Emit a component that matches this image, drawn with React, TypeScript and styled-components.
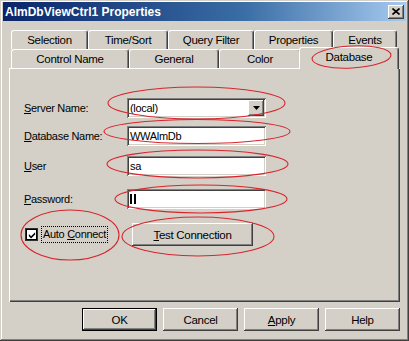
import React from 'react';
import styled, { createGlobalStyle, css } from 'styled-components';

const Global = createGlobalStyle`
  html, body { margin: 0; padding: 0; background: #d4d0c8; }
  body {
    font-family: "Liberation Sans", Arial, sans-serif;
    font-size: 11px;
    color: #000;
    letter-spacing: -0.3px;
  }
  #root { width: 409px; height: 341px; }
`;

const raised = css`
  box-shadow: inset -1px -1px 0 #404040, inset 1px 1px 0 #ffffff,
    inset -2px -2px 0 #808080, inset 2px 2px 0 #d4d0c8;
`;

const sunken = css`
  box-shadow: inset 1px 1px 0 #808080, inset -1px -1px 0 #ffffff,
    inset 2px 2px 0 #404040, inset -2px -2px 0 #d4d0c8;
`;

const Window = styled.div`
  position: relative;
  width: 409px;
  height: 341px;
  box-sizing: border-box;
  background: #d4d0c8;
  padding: 2px 3px 3px 3px;
  box-shadow: inset -1px -1px 0 #404040, inset 1px 1px 0 #d4d0c8,
    inset -2px -2px 0 #808080, inset 2px 2px 0 #ffffff;
  display: flex;
  flex-direction: column;
`;

const TitleBar = styled.div`
  height: 19px;
  display: flex;
  align-items: center;
  justify-content: space-between;
  padding-left: 2px;
  background: linear-gradient(to right, #0a246a, #3a6ea5 60%, #a6caf0);
  color: #fff;
  font-weight: bold;
  font-size: 12px;
  letter-spacing: 0;
`;

const CloseButton = styled.div`
  width: 16px;
  height: 14px;
  margin-right: 2px;
  background: #d4d0c8;
  ${raised};
  display: flex;
  align-items: center;
  justify-content: center;
`;

const Body = styled.div`
  display: flex;
  flex-direction: column;
  padding: 10px 6px 0 6px;
`;

const TabRow = styled.div<{ $h: number }>`
  display: flex;
  align-items: flex-end;
  height: ${p => p.$h}px;
  padding-left: 2px;
`;

const Tab = styled.div<{ $w: number; $sel?: boolean }>`
  box-sizing: border-box;
  width: ${p => (p.$sel ? p.$w + 4 : p.$w)}px;
  height: ${p => (p.$sel ? 22 : 19)}px;
  background: #d4d0c8;
  border-left: 1px solid #ffffff;
  border-top: 1px solid #ffffff;
  border-right: 1px solid #404040;
  border-radius: 3px 3px 0 0;
  box-shadow: inset -1px 0 0 #808080;
  display: flex;
  align-items: center;
  justify-content: center;
  font-size: 11.5px;
  padding-bottom: ${p => (p.$sel ? 3 : 0)}px;
  ${p =>
    p.$sel &&
    css`
      position: relative;
      z-index: 2;
      margin: 0 -2px -1px -2px;
    `}
`;

const Panel = styled.div`
  height: 234px;
  box-sizing: border-box;
  background: #d4d0c8;
  box-shadow: inset 1px 1px 0 #ffffff, inset -1px -1px 0 #404040,
    inset -2px -2px 0 #808080;
  padding: 0 0 0 15px;
  display: flex;
  flex-direction: column;
`;

const FieldRow = styled.div<{ $mt: number; $h?: number }>`
  display: flex;
  align-items: center;
  height: ${p => p.$h ?? 20}px;
  margin-top: ${p => p.$mt}px;
`;

const Label = styled.div`
  width: 103px;
  padding-bottom: 1px;
`;

const Key = styled.span`
  text-decoration: underline;
  text-underline-offset: 1px;
`;

const TextBox = styled.div`
  box-sizing: border-box;
  width: 139px;
  height: 20px;
  background: #fff;
  ${sunken};
  display: flex;
  align-items: center;
  padding: 0 2px 0 3px;
`;

const ComboValue = styled.div`
  flex: 1;
`;

const DropButton = styled.div`
  width: 16px;
  height: 16px;
  background: #d4d0c8;
  ${raised};
  display: flex;
  align-items: center;
  justify-content: center;
`;

const CheckGroup = styled.div`
  width: 108px;
  display: flex;
  align-items: center;
`;

const CheckBox = styled.div`
  box-sizing: border-box;
  width: 13px;
  height: 13px;
  margin-left: 1px;
  background: #fff;
  box-shadow: inset 0 0 0 1px #303030, inset 0 0 0 2px #000;
  display: flex;
  align-items: center;
  justify-content: center;
`;

const FocusLabel = styled.div`
  margin-left: 3px;
  padding: 1px 1px 2px 1px;
  border: 1px dotted #000;
`;

const Button = styled.div<{ $w: number; $default?: boolean }>`
  box-sizing: border-box;
  width: ${p => p.$w}px;
  height: 23px;
  background: #d4d0c8;
  display: flex;
  align-items: center;
  justify-content: center;
  font-size: 11.5px;
  ${p =>
    p.$default
      ? css`
          border: 1px solid #000;
          box-shadow: inset -1px -1px 0 #404040, inset 1px 1px 0 #ffffff,
            inset -2px -2px 0 #808080;
        `
      : raised};
`;

const ButtonRow = styled.div`
  display: flex;
  justify-content: flex-end;
  gap: 6px;
  margin-top: 6px;
`;

const Annotations = styled.svg`
  position: absolute;
  left: 0;
  top: 0;
  pointer-events: none;
  z-index: 5;
`;

const backTabs = [
  { t: 'Selection', w: 77 },
  { t: 'Time/Sort', w: 80 },
  { t: 'Query Filter', w: 86 },
  { t: 'Properties', w: 79 },
  { t: 'Events', w: 64 },
];

const frontTabs = [
  { t: 'Control Name', w: 118 },
  { t: 'General', w: 90 },
  { t: 'Color', w: 82 },
  { t: 'Database', w: 96, sel: true },
];

const ellipses = [
  { cx: 351.5, cy: 57, rx: 39.5, ry: 11, r: -3 },
  { cx: 196.5, cy: 103, rx: 88.5, ry: 16, r: 0 },
  { cx: 197, cy: 131.5, rx: 93, ry: 12, r: 0 },
  { cx: 197.5, cy: 164, rx: 90.5, ry: 14, r: 0 },
  { cx: 201, cy: 199, rx: 86, ry: 14, r: 0 },
  { cx: 70, cy: 235, rx: 49, ry: 25, r: 0 },
  { cx: 198, cy: 236.5, rx: 76, ry: 19.5, r: 0 },
];

export default function App() {
  return (
    <>
      <Global />
      <Window>
        <TitleBar>
          <span>AlmDbViewCtrl1 Properties</span>
          <CloseButton>
            <svg width="8" height="7" viewBox="0 0 8 7">
              <path d="M0.5 0.5 L7.5 6.5 M7.5 0.5 L0.5 6.5" stroke="#000" strokeWidth="1.6" />
            </svg>
          </CloseButton>
        </TitleBar>
        <Body>
          <TabRow $h={18}>
            {backTabs.map(b => (
              <Tab key={b.t} $w={b.w}>{b.t}</Tab>
            ))}
          </TabRow>
          <TabRow $h={19}>
            {frontTabs.map(b => (
              <Tab key={b.t} $w={b.w} $sel={b.sel}>{b.t}</Tab>
            ))}
          </TabRow>
          <Panel>
            <FieldRow $mt={30}>
              <Label><Key>S</Key>erver Name:</Label>
              <TextBox>
                <ComboValue>(local)</ComboValue>
                <DropButton>
                  <svg width="7" height="4" viewBox="0 0 7 4">
                    <path d="M0 0 H7 L3.5 4 Z" fill="#000" />
                  </svg>
                </DropButton>
              </TextBox>
            </FieldRow>
            <FieldRow $mt={8}>
              <Label><Key>D</Key>atabase Name:</Label>
              <TextBox>WWAlmDb</TextBox>
            </FieldRow>
            <FieldRow $mt={10}>
              <Label><Key>U</Key>ser</Label>
              <TextBox>sa</TextBox>
            </FieldRow>
            <FieldRow $mt={13}>
              <Label><Key>P</Key>assword:</Label>
              <TextBox>
                <svg width="7" height="10" viewBox="0 0 7 10">
                  <rect x="0" y="0" width="2" height="10" fill="#000" />
                  <rect x="4" y="0" width="2" height="10" fill="#000" />
                </svg>
              </TextBox>
            </FieldRow>
            <FieldRow $mt={14} $h={23}>
              <CheckGroup>
                <CheckBox>
                  <svg width="8" height="8" viewBox="0 0 9 9">
                    <path d="M1 3.5 L3.5 6 L8 1.5 L8 4 L3.5 8.5 L1 6 Z" fill="#000" />
                  </svg>
                </CheckBox>
                <FocusLabel>Auto <Key>C</Key>onnect</FocusLabel>
              </CheckGroup>
              <Button $w={121}><span><Key>T</Key>est Connection</span></Button>
            </FieldRow>
          </Panel>
          <ButtonRow>
            <Button $w={75} $default>OK</Button>
            <Button $w={75}>Cancel</Button>
            <Button $w={75}><span><Key>A</Key>pply</span></Button>
            <Button $w={75}>Help</Button>
          </ButtonRow>
        </Body>
        <Annotations width="409" height="341" viewBox="0 0 409 341">
          {ellipses.map((e, i) => (
            <ellipse
              key={i}
              cx={e.cx}
              cy={e.cy}
              rx={e.rx}
              ry={e.ry}
              transform={`rotate(${e.r} ${e.cx} ${e.cy})`}
              fill="none"
              stroke="#d8242c"
              strokeWidth="1.1"
            />
          ))}
        </Annotations>
      </Window>
    </>
  );
}
